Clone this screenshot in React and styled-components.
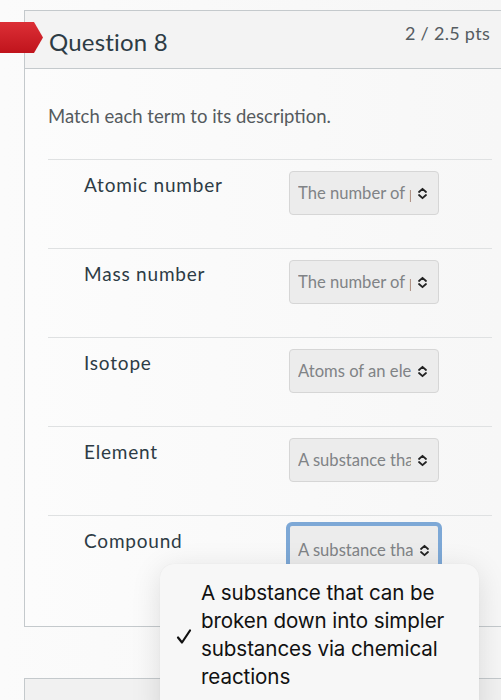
import React from "react";
import styled, { createGlobalStyle } from "styled-components";

const Global = createGlobalStyle`
  html, body { margin: 0; padding: 0; background: #fafafa; overflow: hidden; }
  body { font-family: Lato, "Open Sans", sans-serif; }
`;

const Page = styled.div`
  position: relative;
  width: 501px;
  height: 700px;
  overflow: hidden;
  padding: 10px 0 0 24px;
  box-sizing: border-box;
  background: linear-gradient(90deg, #fbfbfb 0%, #f6f6f6 100%);
`;

const Card = styled.section`
  border: 1px solid #c4c9cc;
  border-right: none;
  background: linear-gradient(90deg, #fcfcfc 0%, #f7f7f7 100%);
`;

const Header = styled.header`
  height: 58px;
  box-sizing: border-box;
  background: #f3f3f3;
  border-bottom: 1px solid #c4c9cc;
  display: flex;
  justify-content: space-between;
  align-items: flex-start;
  padding: 0 11px 0 24px;
`;

const Title = styled.h2`
  margin: 16px 0 0;
  font-size: 24px;
  font-weight: 400;
  color: #2d3b45;
  line-height: 30px;
  letter-spacing: 0.2px;
`;

const Points = styled.div`
  margin-top: 11px;
  font-size: 18px;
  color: #555c61;
  line-height: 22px;
  letter-spacing: 0.3px;
`;

const Flag = styled.div`
  position: absolute;
  left: 0;
  top: 22px;
  width: 43px;
  height: 31px;
  background: linear-gradient(180deg, #dc2f36 0%, #c0141c 100%);
  clip-path: polygon(0 0, 34px 0, 43px 50%, 34px 100%, 0 100%);
`;

const Body = styled.div`
  padding: 35px 9px 22px 23px;
`;

const Prompt = styled.p`
  margin: 0 0 30px;
  font-size: 18.5px;
  line-height: 25px;
  color: #555a5e;
`;

const Row = styled.div`
  height: 89px;
  box-sizing: border-box;
  border-top: 1px solid #dfe1e2;
  display: grid;
  grid-template-columns: 205px 1fr;
  padding-left: 36px;
`;

const Term = styled.div`
  font-size: 19px;
  line-height: 24px;
  color: #2d3b45;
  padding-top: 13px;
  letter-spacing: 0.8px;
`;

const Select = styled.div`
  margin-top: ${(p) => (p.$focused ? "6px" : "11px")};
  margin-left: ${(p) => (p.$focused ? "-3px" : "0")};
  width: ${(p) => (p.$focused ? "156px" : "150px")};
  height: ${(p) => (p.$focused ? "50px" : "44px")};
  box-sizing: border-box;
  border: ${(p) => (p.$focused ? "4px solid #7da8d6" : "1px solid #d6d6d6")};
  border-radius: ${(p) => (p.$focused ? "6px" : "4px")};
  background: #ececec;
  display: flex;
  align-items: center;
  gap: 6px;
  padding: ${(p) => (p.$focused ? "6px 8px 0 8px" : "0 10px 0 8px")};
  color: #808386;
  font-size: 16.6px;
`;

const SelectText = styled.span`
  flex: 1;
  white-space: nowrap;
  overflow: hidden;
`;

const NextCard = styled.div`
  margin-top: 51px;
  height: 60px;
  border: 1px solid #c4c9cc;
  border-right: none;
  background: #f1f1f1;
`;

const Popover = styled.div`
  position: absolute;
  left: 160px;
  top: 564px;
  width: 319px;
  height: 160px;
  border-radius: 14px;
  background: #f7f7f7;
  box-shadow: 0 6px 30px rgba(0, 0, 0, 0.12), 0 0 1px rgba(0, 0, 0, 0.08);
  display: flex;
  align-items: flex-start;
  padding: 15px 6px 0 16px;
  box-sizing: border-box;
  font-family: Inter, Roboto, sans-serif;
`;

const Check = styled.svg`
  flex: none;
  margin-top: 49px;
  width: 16px;
  height: 17px;
`;

const Option = styled.div`
  margin-left: 9px;
  font-size: 20.6px;
  line-height: 28px;
  color: #111;
  letter-spacing: -0.1px;
`;

const Chevron = () => (
  <svg width="11" height="13" viewBox="0 0 11 13" fill="none" stroke="#222" strokeWidth="1.8" strokeLinecap="round" strokeLinejoin="round" style={{ flex: "none" }}>
    <path d="M2 5 L5.5 1.8 L9 5" />
    <path d="M2 8 L5.5 11.2 L9 8" />
  </svg>
);

const rows = [
  ["Atomic number", "The number of protons"],
  ["Mass number", "The number of protons and neutrons"],
  ["Isotope", "Atoms of an element"],
  ["Element", "A substance that cannot be broken down"],
  ["Compound", "A substance that can be broken down", true],
];

export default function App() {
  return (
    <>
      <Global />
      <Page>
        <Flag />
        <Card>
          <Header>
            <Title>Question 8</Title>
            <Points>2 / 2.5 pts</Points>
          </Header>
          <Body>
            <Prompt>Match each term to its description.</Prompt>
            {rows.map(([term, value, focused]) => (
              <Row key={term}>
                <Term>{term}</Term>
                <Select $focused={focused}>
                  <SelectText>{value}</SelectText>
                  <Chevron />
                </Select>
              </Row>
            ))}
          </Body>
        </Card>
        <NextCard />
        <Popover>
          <Check viewBox="0 0 16 17" fill="none" stroke="#111" strokeWidth="2.2" strokeLinecap="round" strokeLinejoin="round">
            <path d="M2 9.5 L6 14.5 L14 2.5" />
          </Check>
          <Option>
            A substance that can be broken down into simpler substances via chemical reactions
          </Option>
        </Popover>
      </Page>
    </>
  );
}
